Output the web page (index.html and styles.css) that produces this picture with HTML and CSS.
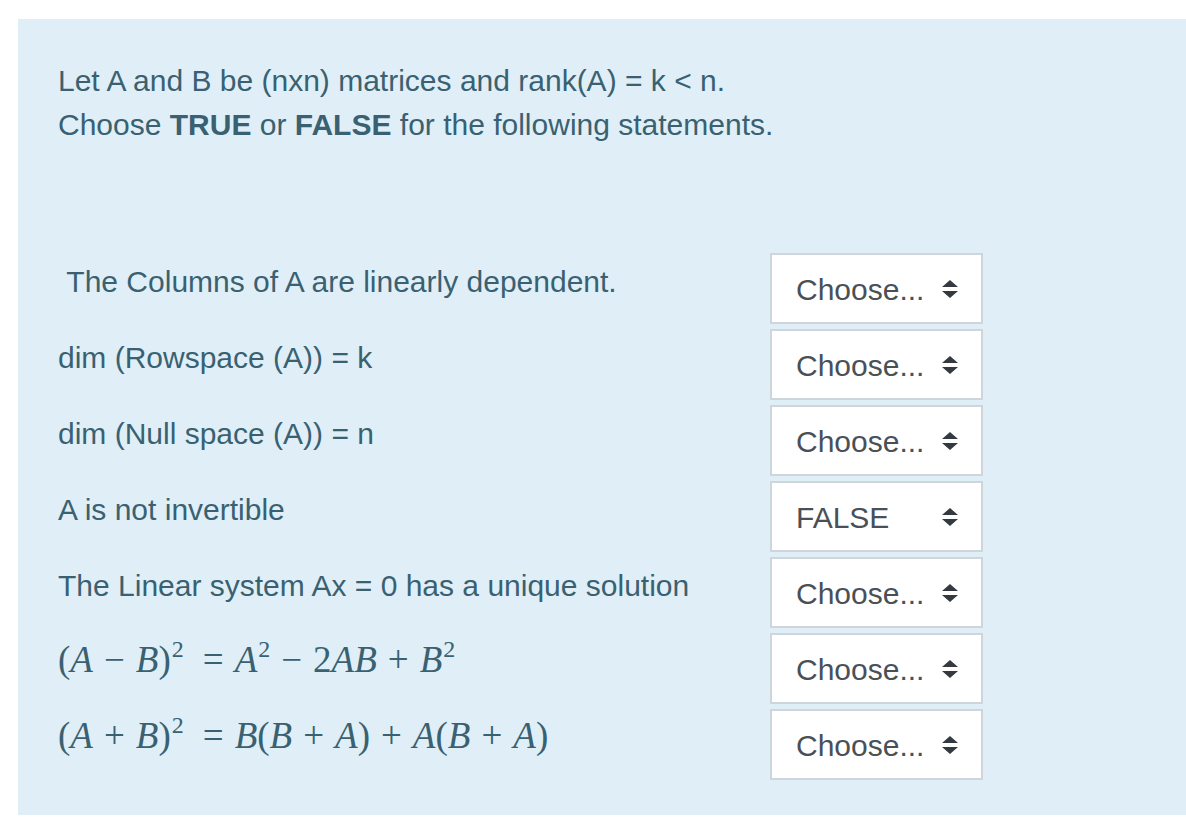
FILE: index.html
```html
<!DOCTYPE html>
<html>
<head>
<meta charset="utf-8">
<link rel="stylesheet" href="styles.css">
</head>
<body>
<div class="formulation">
  <div class="qtext">
    <p>Let A and B be (nxn) matrices and rank(A) = k &lt; n.</p>
    <p>Choose <strong>TRUE</strong> or <strong>FALSE</strong> for the following statements.</p>
  </div>
  <div class="answers">
    <div class="label">&nbsp;The Columns of A are linearly dependent.</div>
    <div class="select"><span class="val">Choose...</span><svg class="arrows" viewBox="0 0 16 18" width="16" height="18"><path d="M8 0 L16 7 L0 7 Z M0 11 L16 11 L8 18 Z" fill="#343a40"/></svg></div>

    <div class="label">dim (Rowspace (A)) = k</div>
    <div class="select"><span class="val">Choose...</span><svg class="arrows" viewBox="0 0 16 18" width="16" height="18"><path d="M8 0 L16 7 L0 7 Z M0 11 L16 11 L8 18 Z" fill="#343a40"/></svg></div>

    <div class="label">dim (Null space (A)) = n</div>
    <div class="select"><span class="val">Choose...</span><svg class="arrows" viewBox="0 0 16 18" width="16" height="18"><path d="M8 0 L16 7 L0 7 Z M0 11 L16 11 L8 18 Z" fill="#343a40"/></svg></div>

    <div class="label">A is not invertible</div>
    <div class="select"><span class="val">FALSE</span><svg class="arrows" viewBox="0 0 16 18" width="16" height="18"><path d="M8 0 L16 7 L0 7 Z M0 11 L16 11 L8 18 Z" fill="#343a40"/></svg></div>

    <div class="label">The Linear system Ax = 0 has a unique solution</div>
    <div class="select"><span class="val">Choose...</span><svg class="arrows" viewBox="0 0 16 18" width="16" height="18"><path d="M8 0 L16 7 L0 7 Z M0 11 L16 11 L8 18 Z" fill="#343a40"/></svg></div>

    <div class="label math"><span class="mo">(</span><i>A</i><span class="bin">−</span><i>B</i><span class="mo">)</span><sup>2</sup><span class="rel">=</span><i>A</i><sup>2</sup><span class="bin">−</span><span class="mo">2</span><i>A</i><i>B</i><span class="bin">+</span><i>B</i><sup>2</sup></div>
    <div class="select"><span class="val">Choose...</span><svg class="arrows" viewBox="0 0 16 18" width="16" height="18"><path d="M8 0 L16 7 L0 7 Z M0 11 L16 11 L8 18 Z" fill="#343a40"/></svg></div>

    <div class="label math"><span class="mo">(</span><i>A</i><span class="bin">+</span><i>B</i><span class="mo">)</span><sup>2</sup><span class="rel">=</span><i>B</i><span class="mo">(</span><i>B</i><span class="bin">+</span><i>A</i><span class="mo">)</span><span class="bin">+</span><i>A</i><span class="mo">(</span><i>B</i><span class="bin">+</span><i>A</i><span class="mo">)</span></div>
    <div class="select"><span class="val">Choose...</span><svg class="arrows" viewBox="0 0 16 18" width="16" height="18"><path d="M8 0 L16 7 L0 7 Z M0 11 L16 11 L8 18 Z" fill="#343a40"/></svg></div>
  </div>
</div>
</body>
</html>
```

FILE: styles.css
```css
html, body {
  margin: 0;
  padding: 0;
  background: #ffffff;
}
body {
  font-family: "Liberation Sans", Arial, sans-serif;
  font-size: 30px;
  line-height: 44px;
  color: #396171;
}
.formulation {
  margin: 19px 0 0 18px;
  background: #e0eff7;
  padding: 40px 40px 35px 40px;
  height: 721px;
}
.qtext p {
  margin: 0;
}
.qtext strong {
  font-weight: bold;
}
.answers {
  margin-top: 106px;
  display: grid;
  grid-template-columns: 712px 213px;
  row-gap: 5px;
}
.label {
  padding-top: 7px;
  white-space: nowrap;
}
.select {
  box-sizing: border-box;
  height: 71px;
  border: 2px solid #ced6dc;
  background: #ffffff;
  display: flex;
  align-items: center;
  padding: 3px 0 0 24px;
  color: #495057;
  line-height: normal;
}
.select .val {
  flex: 1;
}
.select .arrows {
  margin-right: 23px;
  margin-top: -3px;
}
.math {
  font-family: "Liberation Serif", "Times New Roman", serif;
  font-size: 37px;
  padding-top: 5px;
}
.math i {
  font-style: italic;
}
.math sup {
  font-size: 24px;
  vertical-align: 0;
  position: relative;
  top: -15px;
  line-height: 0;
  padding-left: 1px;
}
.math .bin {
  padding: 0 11px;
}
.math .rel {
  padding: 0 11px 0 19px;
}
```
